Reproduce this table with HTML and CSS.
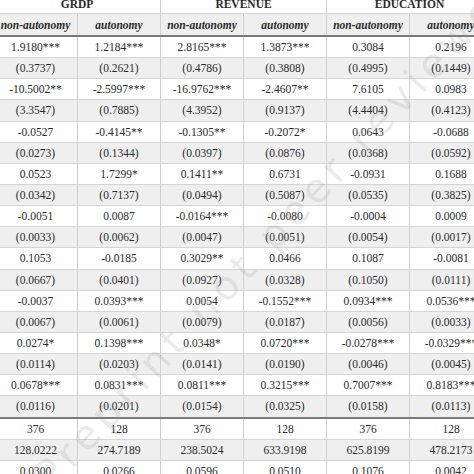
FILE: index.html
```html
<!DOCTYPE html>
<html>
<head>
<meta charset="utf-8">
<link rel="stylesheet" href="styles.css">
</head>
<body>
<div class="page">
  <div class="table">
    <div class="row head1">
      <div class="cell span2">GRDP</div>
      <div class="cell span2">REVENUE</div>
      <div class="cell span2">EDUCATION</div>
    </div>
    <div class="row head2">
      <div class="cell">non-autonomy</div><div class="cell">autonomy</div>
      <div class="cell">non-autonomy</div><div class="cell">autonomy</div>
      <div class="cell">non-autonomy</div><div class="cell">autonomy</div>
    </div>
    <div class="row"><div class="cell">1.9180***</div><div class="cell">1.2184***</div><div class="cell">2.8165***</div><div class="cell">1.3873***</div><div class="cell">0.3084</div><div class="cell">0.2196</div></div>
    <div class="row se"><div class="cell">(0.3737)</div><div class="cell">(0.2621)</div><div class="cell">(0.4786)</div><div class="cell">(0.3808)</div><div class="cell">(0.4995)</div><div class="cell">(0.1449)</div></div>
    <div class="row"><div class="cell">-10.5002**</div><div class="cell">-2.5997***</div><div class="cell">-16.9762***</div><div class="cell">-2.4607**</div><div class="cell">7.6105</div><div class="cell">0.0983</div></div>
    <div class="row se"><div class="cell">(3.3547)</div><div class="cell">(0.7885)</div><div class="cell">(4.3952)</div><div class="cell">(0.9137)</div><div class="cell">(4.4404)</div><div class="cell">(0.4123)</div></div>
    <div class="row"><div class="cell">-0.0527</div><div class="cell">-0.4145**</div><div class="cell">-0.1305**</div><div class="cell">-0.2072*</div><div class="cell">0.0643</div><div class="cell">-0.0688</div></div>
    <div class="row se"><div class="cell">(0.0273)</div><div class="cell">(0.1344)</div><div class="cell">(0.0397)</div><div class="cell">(0.0876)</div><div class="cell">(0.0368)</div><div class="cell">(0.0592)</div></div>
    <div class="row"><div class="cell">0.0523</div><div class="cell">1.7299*</div><div class="cell">0.1411**</div><div class="cell">0.6731</div><div class="cell">-0.0931</div><div class="cell">0.1688</div></div>
    <div class="row se"><div class="cell">(0.0342)</div><div class="cell">(0.7137)</div><div class="cell">(0.0494)</div><div class="cell">(0.5087)</div><div class="cell">(0.0535)</div><div class="cell">(0.3825)</div></div>
    <div class="row"><div class="cell">-0.0051</div><div class="cell">0.0087</div><div class="cell">-0.0164***</div><div class="cell">-0.0080</div><div class="cell">-0.0004</div><div class="cell">0.0009</div></div>
    <div class="row se"><div class="cell">(0.0033)</div><div class="cell">(0.0062)</div><div class="cell">(0.0047)</div><div class="cell">(0.0051)</div><div class="cell">(0.0054)</div><div class="cell">(0.0017)</div></div>
    <div class="row"><div class="cell">0.1053</div><div class="cell">-0.0185</div><div class="cell">0.3029**</div><div class="cell">0.0466</div><div class="cell">0.1087</div><div class="cell">-0.0081</div></div>
    <div class="row se"><div class="cell">(0.0667)</div><div class="cell">(0.0401)</div><div class="cell">(0.0927)</div><div class="cell">(0.0328)</div><div class="cell">(0.1050)</div><div class="cell">(0.0111)</div></div>
    <div class="row"><div class="cell">-0.0037</div><div class="cell">0.0393***</div><div class="cell">0.0054</div><div class="cell">-0.1552***</div><div class="cell">0.0934***</div><div class="cell">0.0536***</div></div>
    <div class="row se"><div class="cell">(0.0067)</div><div class="cell">(0.0061)</div><div class="cell">(0.0079)</div><div class="cell">(0.0187)</div><div class="cell">(0.0056)</div><div class="cell">(0.0033)</div></div>
    <div class="row"><div class="cell">0.0274*</div><div class="cell">0.1398***</div><div class="cell">0.0348*</div><div class="cell">0.0720***</div><div class="cell">-0.0278***</div><div class="cell">-0.0329***</div></div>
    <div class="row se"><div class="cell">(0.0114)</div><div class="cell">(0.0203)</div><div class="cell">(0.0141)</div><div class="cell">(0.0190)</div><div class="cell">(0.0046)</div><div class="cell">(0.0045)</div></div>
    <div class="row"><div class="cell">0.0678***</div><div class="cell">0.0831***</div><div class="cell">0.0811***</div><div class="cell">0.3215***</div><div class="cell">0.7007***</div><div class="cell">0.8183***</div></div>
    <div class="row se last"><div class="cell">(0.0116)</div><div class="cell">(0.0201)</div><div class="cell">(0.0154)</div><div class="cell">(0.0325)</div><div class="cell">(0.0158)</div><div class="cell">(0.0113)</div></div>
    <div class="row"><div class="cell">376</div><div class="cell">128</div><div class="cell">376</div><div class="cell">128</div><div class="cell">376</div><div class="cell">128</div></div>
    <div class="row se"><div class="cell">128.0222</div><div class="cell">274.7189</div><div class="cell">238.5024</div><div class="cell">633.9198</div><div class="cell">625.8199</div><div class="cell">478.2173</div></div>
    <div class="row"><div class="cell">0.0300</div><div class="cell">0.0266</div><div class="cell">0.0596</div><div class="cell">0.0510</div><div class="cell">0.1076</div><div class="cell">0.0042</div></div>
  </div>
  <div class="watermark">Preprint not peer reviewed</div>
</div>
</body>
</html>
```

FILE: styles.css
```css
html, body {
  margin: 0;
  padding: 0;
  background: #ffffff;
}
.page {
  position: relative;
  width: 474px;
  height: 474px;
  overflow: hidden;
}
.table {
  width: 498px;
  margin: -6px 0 0 -6px;
  font-family: "Liberation Serif", "Times New Roman", serif;
  font-size: 11.5px;
  color: #2a2a2a;
}
.row {
  display: grid;
  grid-template-columns: repeat(6, 83px);
  height: 21.15px;
  box-sizing: border-box;
  border-bottom: 1px solid #d4d4d4;
  background: #ffffff;
}
.row.se {
  background: #efefef;
}
.cell {
  display: flex;
  align-items: center;
  justify-content: center;
  border-left: 1px solid #cfcfcf;
  white-space: nowrap;
}
.cell:first-child {
  border-left: none;
}
.span2 {
  grid-column: span 2;
}
.head1 {
  height: 20px;
  font-weight: bold;
  border-bottom: 1px solid #d4d4d4;
}
.head2 {
  height: 23px;
  background: #efefef;
  font-weight: bold;
  font-style: italic;
  border-bottom: 2px solid #7a7a7a;
}
.row.last {
  height: 22.15px;
  border-bottom: 2px solid #7a7a7a;
}
.watermark {
  position: absolute;
  left: -60px;
  top: 225px;
  width: 640px;
  text-align: center;
  font-family: "DejaVu Sans", sans-serif;
  font-size: 40px;
  letter-spacing: 6px;
  color: rgba(150, 150, 150, 0.2);
  transform: rotate(-47deg);
  transform-origin: center center;
  pointer-events: none;
  white-space: nowrap;
}
```
